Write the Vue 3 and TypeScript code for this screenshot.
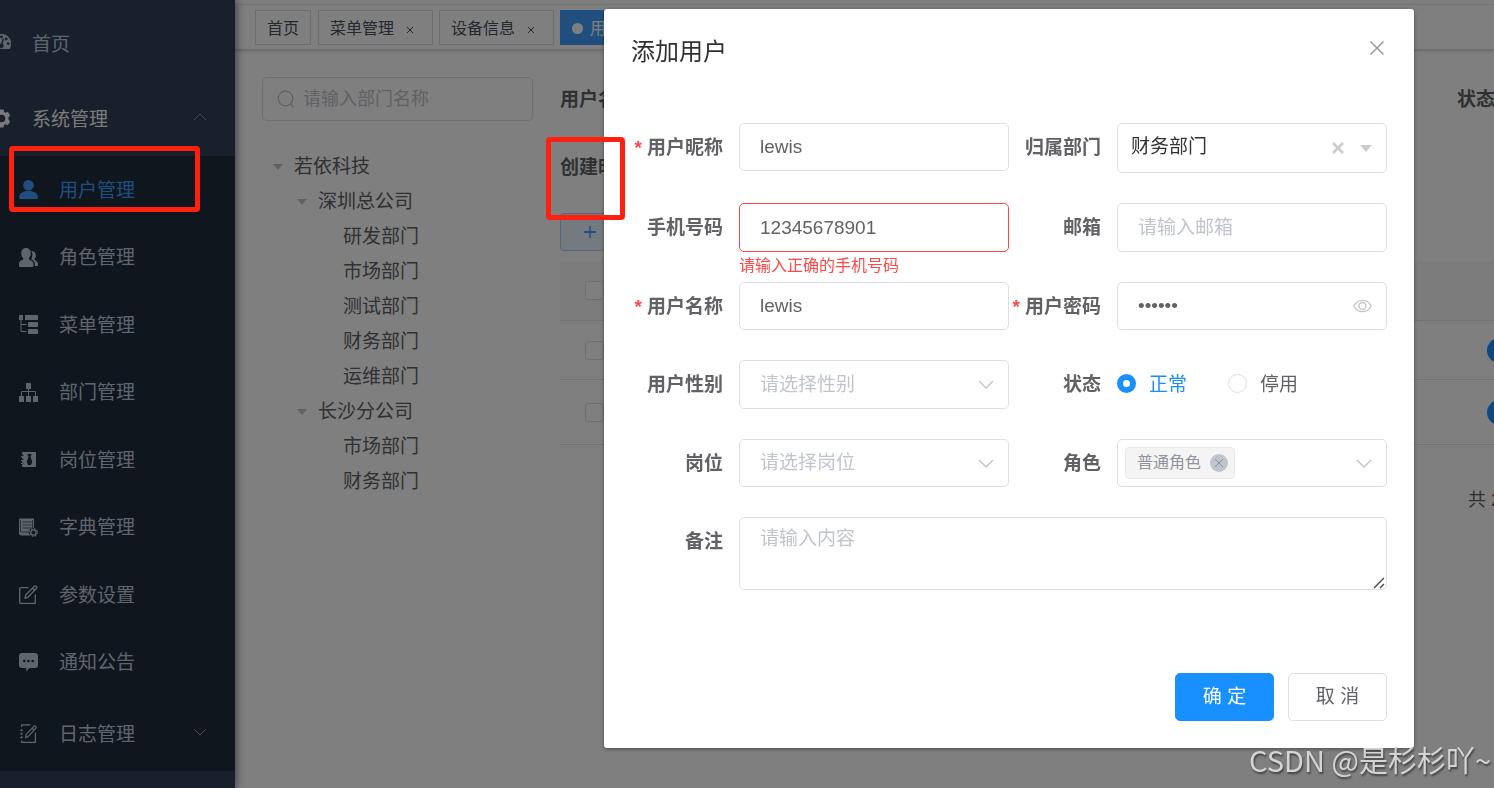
<script setup lang="ts">
import { ref } from 'vue'

interface MenuItem {
  title: string
  icon: string
}
interface TreeNode {
  label: string
  level: number
  leaf?: boolean
}

const submenuBg = '#1f2d3d'
const sidebarBg = '#304156'

const icons: Record<string, string> = {
  dashboard: `<path fill="currentColor" d="M9.5 0A9.5 9.5 0 0 0 1.600 15H17.400A9.500 9.500 0 0 0 9.500 0z"/><g fill="${sidebarBg}"><circle cx="2.800" cy="9.600" r="1.400"/><circle cx="4.800" cy="5" r="1.400"/><circle cx="9.500" cy="3" r="1.400"/><circle cx="14.200" cy="5" r="1.400"/><circle cx="16.200" cy="9.600" r="1.400"/><circle cx="9.300" cy="11.800" r="2.400"/></g><path d="M9.500 11.200L11.200 5.200" stroke="${sidebarBg}" stroke-width="1.400" stroke-linecap="round"/>`,
  gear: `<path fill="currentColor" fill-rule="evenodd" d="M7.500 .5h4l.6 2.400 1.300.8 2.500-.8 2.300 3.600-1.700 1.800v2.400l1.700 1.800-2.300 3.600-2.500-.8-1.300.8-.6 2.400h-4l-.6-2.400-1.300-.8-2.500.8L.8 12.500l1.700-1.800V8.300L.8 6.500l2.300-3.600 2.500.8 1.300-.8zM9.500 5.700a3.800 3.800 0 1 0 0 7.600 3.800 3.800 0 0 0 0-7.600z"/>`,
  user: `<g fill="currentColor"><circle cx="9.500" cy="5.300" r="5.300"/><path d="M0 17.500C0 13.500 4 11 9.500 11S19 13.500 19 17.500Q19 19 17.500 19H1.500Q0 19 0 17.500z"/></g>`,
  peoples: `<g fill="currentColor"><path d="M7 0C9.800 0 11.800 2 11.800 5c0 2-.7 3.800-1.800 5v1.500c2 .9 4.500 1.700 4.500 4.500v2q0 1-1 1H1q-1 0-1-1v-2c0-2.800 2.500-3.600 4.200-4.500V10C2.900 8.800 2.200 7 2.200 5 2.200 2 4.200 0 7 0z"/><path d="M12 3c3 0 4.900 1.600 4.900 4.200 0 1.500-.6 2.800-1.500 3.800v1c1.800.8 3.600 1.600 3.600 4v2h-3.200v-2.200c0-2.300-1.600-3.600-3.600-4.600.8-1.300 1.200-3 1.200-4.700 0-1.300-.4-2.500-1.400-3.500z"/></g>`,
  tree: `<g fill="currentColor"><rect width="4" height="5" rx=".6"/><rect x="6" width="13" height="5" rx=".6"/><rect x="9" y="7" width="10" height="5" rx=".6"/><rect x="9" y="14" width="10" height="5" rx=".6"/></g><path d="M2 4v12.500h5.500M2 9.500h5.500" fill="none" stroke="currentColor"/>`,
  org: `<g fill="currentColor"><rect x="7" width="5" height="6" rx=".5"/><rect y="13" width="5" height="6" rx=".5"/><rect x="7" y="13" width="5" height="6" rx=".5"/><rect x="14" y="13" width="5" height="6" rx=".5"/></g><path d="M9.500 5v8.500M2.500 13.500v-5h14v5" fill="none" stroke="currentColor"/>`,
  post: `<rect x="3" y="2" width="14" height="15" rx="1" fill="currentColor"/><g fill="${submenuBg}"><path d="M8.300 4h4.400l-1.200 2.700L13.300 12 12 15H9l-1.300-3 1.800-5.300z"/><circle cx="3.500" cy="5.500" r="1"/><circle cx="3.500" cy="9.500" r="1"/><circle cx="3.500" cy="13.500" r="1"/></g><path d="M2 6.500h2M2 10.500h2M2 13.500h2" stroke="currentColor"/>`,
  dict: `<path d="M1 .500h14v17H2.500Q0 17.500 0 15V2Q0 .500 1 .500z" fill="currentColor"/><path d="M3.500 4h9M3.500 7h9M3.500 10h9M1 14h9M1.500 2v11.500M13.500 2v9" stroke="${submenuBg}" stroke-width=".7"/><circle cx="14.500" cy="14.500" r="4.700" fill="${submenuBg}"/><g fill="none" stroke="currentColor"><circle cx="14.500" cy="14.500" r="2.700" stroke-width="1.300"/><circle cx="14.500" cy="14.500" r="3.800" stroke-width="1.300" stroke-dasharray="1.500 1.500"/></g>`,
  edit: `<g fill="none" stroke="currentColor" stroke-width="1.300" stroke-linejoin="round"><path d="M9.500 2.600H1.600Q.7 2.600.7 3.500v14Q.7 18.400 1.600 18.400h13.800q.9 0 .9-.9V9.500"/><path d="M6 13.300l.8-3.500 8.600-8.600q1-.8 2 .1t.1 2L9 12.200zM13.500 3l2.300 2.300"/></g>`,
  message: `<path fill="currentColor" d="M3 0h13q3 0 3 3v9q0 3-3 3h-5.500L7.300 18.500V15H3q-3 0-3-3V3Q0 0 3 0z"/><g fill="${submenuBg}"><circle cx="5.300" cy="8" r="1.300"/><circle cx="9.500" cy="8" r="1.300"/><circle cx="13.700" cy="8" r="1.300"/></g>`,
  log: `<g fill="none" stroke="currentColor" stroke-width="1.200" stroke-linejoin="round"><path d="M11.500.8H2.700V3M2.700 16.500v1.900h13.700V8.500"/><path d="M2.700 5v9.500" stroke-dasharray="2 1.600"/><path d="M1 6.500h2.500M1 10h2.500M1 13.500h2.500"/><path d="M6.500 13.700l.7-3.400 7.600-8q.9-.8 1.900.1t.1 2l-7.500 8zM13 4l2.200 2.200"/></g>`,
}

const submenu: MenuItem[] = [
  { title: '用户管理', icon: 'user' },
  { title: '角色管理', icon: 'peoples' },
  { title: '菜单管理', icon: 'tree' },
  { title: '部门管理', icon: 'org' },
  { title: '岗位管理', icon: 'post' },
  { title: '字典管理', icon: 'dict' },
  { title: '参数设置', icon: 'edit' },
  { title: '通知公告', icon: 'message' },
]

const departments: TreeNode[] = [
  { label: '若依科技', level: 0 },
  { label: '深圳总公司', level: 1 },
  { label: '研发部门', level: 2, leaf: true },
  { label: '市场部门', level: 2, leaf: true },
  { label: '测试部门', level: 2, leaf: true },
  { label: '财务部门', level: 2, leaf: true },
  { label: '运维部门', level: 2, leaf: true },
  { label: '长沙分公司', level: 1 },
  { label: '市场部门', level: 2, leaf: true },
  { label: '财务部门', level: 2, leaf: true },
]

const nickName = ref('lewis')
const phone = ref('12345678901')
const email = ref('')
const userName = ref('lewis')
const password = ref('123456')
const status = ref('0')
const dept = ref('财务部门')
const gender = ref('')
const post = ref('')
const remark = ref('')
</script>

<template>
  <div class="page">
    <nav class="sidebar">
      <a href="#" class="item top">
        <svg class="icon" viewBox="0 0 19 19" v-html="icons.dashboard"></svg>
        <span>首页</span>
      </a>
      <a href="#" class="item top open">
        <svg class="icon" viewBox="0 0 19 19" v-html="icons.gear"></svg>
        <span>系统管理</span>
        <svg class="arrow" viewBox="0 0 14 8"><path d="M1 7l6-6 6 6" /></svg>
      </a>
      <div class="submenu">
        <div class="group">
          <a v-for="(m, i) in submenu" :key="m.title" href="#" class="item sub" :class="{ active: i === 0 }">
            <svg class="icon" viewBox="0 0 19 19" v-html="icons[m.icon]"></svg>
            <span>{{ m.title }}</span>
          </a>
        </div>
        <a href="#" class="item sub last">
          <svg class="icon" viewBox="0 0 19 19" v-html="icons.log"></svg>
          <span>日志管理</span>
          <svg class="arrow" viewBox="0 0 14 8"><path d="M1 1l6 6 6-6" /></svg>
        </a>
      </div>
    </nav>

    <div class="main">
      <div class="tags">
        <a href="#" class="tag">首页</a>
        <a href="#" class="tag">菜单管理<svg class="x" viewBox="0 0 8 8"><path d="M1 1l6 6M7 1l-6 6" /></svg></a>
        <a href="#" class="tag">设备信息<svg class="x" viewBox="0 0 8 8"><path d="M1 1l6 6M7 1l-6 6" /></svg></a>
        <a href="#" class="tag current"><i class="dot"></i>用户管理<svg class="x" viewBox="0 0 8 8"><path d="M1 1l6 6M7 1l-6 6" /></svg></a>
      </div>

      <div class="content">
        <aside class="depts">
          <label class="search">
            <svg viewBox="0 0 18 18"><circle cx="8.500" cy="8.500" r="7.300" /><path d="M13.500 14l3 3" /></svg>
            <input type="text" placeholder="请输入部门名称" aria-label="部门名称" />
          </label>
          <ul class="tree">
            <li v-for="(n, i) in departments" :key="i" :class="'level' + n.level">
              <svg class="caret" viewBox="0 0 10 6"><path v-if="!n.leaf" d="M0 0h10L5 6z" /></svg>
              <span>{{ n.label }}</span>
            </li>
          </ul>
        </aside>

        <section class="users">
          <div class="filter"><b>用户名称</b><b class="edge">状态</b></div>
          <div class="filter"><b>创建时间</b></div>
          <button type="button" class="add">
            <svg viewBox="0 0 14 14"><path d="M7 1v12M1 7h12" /></svg>新增
          </button>
          <table>
            <thead>
              <tr><th><input type="checkbox" aria-label="全选" /></th><th class="narrow"></th></tr>
            </thead>
            <tbody>
              <tr class="first"><td><input type="checkbox" aria-label="选择第一行" /></td><td class="narrow"><i class="switch"></i></td></tr>
              <tr class="second"><td><input type="checkbox" aria-label="选择第二行" /></td><td class="narrow"><i class="switch"></i></td></tr>
            </tbody>
          </table>
          <div class="pager"><span>共 2 条</span></div>
        </section>
      </div>
    </div>

    <div class="overlay">
      <div class="dialog" role="dialog" aria-labelledby="dialog-title">
        <header>
          <h2 id="dialog-title">添加用户</h2>
          <button type="button" class="close" aria-label="关闭">
            <svg viewBox="0 0 14 14"><path d="M.5.500l13 13M13.500.500l-13 13" /></svg>
          </button>
        </header>

        <form @submit.prevent>
          <div class="field">
            <label for="nick" class="required">用户昵称</label>
            <div class="control"><input id="nick" v-model="nickName" type="text" /></div>
          </div>
          <div class="field">
            <label for="dept">归属部门</label>
            <div class="control dept">
              <select id="dept" v-model="dept"><option>财务部门</option><option>市场部门</option></select>
              <span class="marks">
                <svg class="clear" viewBox="0 0 12 12"><path d="M1 1l10 10M11 1L1 11" /></svg>
                <svg class="down" viewBox="0 0 12 7"><path d="M0 0h12L6 7z" /></svg>
              </span>
            </div>
          </div>

          <div class="field">
            <label for="phone">手机号码</label>
            <div class="control tall invalid">
              <input id="phone" v-model="phone" type="text" aria-describedby="phone-error" />
              <p id="phone-error" class="error">请输入正确的手机号码</p>
            </div>
          </div>
          <div class="field">
            <label for="email">邮箱</label>
            <div class="control tall"><input id="email" v-model="email" type="text" placeholder="请输入邮箱" /></div>
          </div>

          <div class="field">
            <label for="name" class="required">用户名称</label>
            <div class="control"><input id="name" v-model="userName" type="text" /></div>
          </div>
          <div class="field">
            <label for="pwd" class="required">用户密码</label>
            <div class="control">
              <input id="pwd" v-model="password" type="password" />
              <span class="marks eye">
                <svg viewBox="0 0 20 14"><path d="M.8 7C5 -1 15 -1 19.200 7 15 15 5 15 .8 7z" /><circle cx="10" cy="7" r="3.700" /></svg>
              </span>
            </div>
          </div>

          <div class="field">
            <label for="gender">用户性别</label>
            <div class="control tall">
              <select id="gender" v-model="gender" class="blank"><option value="">请选择性别</option><option>男</option><option>女</option></select>
              <span class="marks"><svg class="chevron" viewBox="0 0 16 9"><path d="M1 1l7 7 7-7" /></svg></span>
            </div>
          </div>
          <div class="field">
            <span class="label">状态</span>
            <div class="radios">
              <label><input v-model="status" type="radio" name="status" value="0" /><span>正常</span></label>
              <label><input v-model="status" type="radio" name="status" value="1" /><span>停用</span></label>
            </div>
          </div>

          <div class="field">
            <label for="post">岗位</label>
            <div class="control">
              <select id="post" v-model="post" class="blank"><option value="">请选择岗位</option></select>
              <span class="marks"><svg class="chevron" viewBox="0 0 16 9"><path d="M1 1l7 7 7-7" /></svg></span>
            </div>
          </div>
          <div class="field">
            <label for="role">角色</label>
            <div class="control roles">
              <span class="chip">普通角色
                <button type="button" aria-label="移除普通角色"><svg viewBox="0 0 10 10"><path d="M1 1l8 8M9 1l-8 8" /></svg></button>
              </span>
              <select id="role"><option value=""></option></select>
              <span class="marks"><svg class="chevron" viewBox="0 0 16 9"><path d="M1 1l7 7 7-7" /></svg></span>
            </div>
          </div>

          <div class="field wide">
            <label for="remark">备注</label>
            <div class="memo">
              <textarea id="remark" v-model="remark" placeholder="请输入内容"></textarea>
              <svg class="grip" viewBox="0 0 12 12"><path d="M1 11L11 1M7 11l4-4" /></svg>
            </div>
          </div>
        </form>

        <footer>
          <button type="button" class="primary">确 定</button>
          <button type="button">取 消</button>
        </footer>
      </div>
    </div>

    <div class="highlight menu-mark"></div>
    <div class="highlight filter-mark"></div>
    <div class="watermark">CSDN @是杉杉吖~</div>
  </div>
</template>

<style>
body {
  margin: 0;
  background: #fff;
}
</style>

<style scoped>
* {
  box-sizing: border-box;
}
.page {
  position: relative;
  display: flex;
  height: 100vh;
  min-height: 788px;
  overflow: hidden;
  font: 19px/28px "Liberation Sans", "Noto Sans CJK SC", sans-serif;
  color: #606266;
}
svg {
  display: block;
  flex: none;
  fill: none;
}
input, select, textarea, button {
  font: inherit;
  color: inherit;
  margin: 0;
}
a {
  color: inherit;
  text-decoration: none;
}

.sidebar {
  flex: none;
  width: 235px;
  padding-top: 6px;
  background: #304156;
  color: #bfcbd9;
  box-shadow: 2px 0 8px rgba(0, 21, 41, 0.5);
  z-index: 1;
  overflow: hidden auto;
  scrollbar-width: none;
}
.item {
  display: flex;
  align-items: center;
  padding: 0 28px 0 19px;
}
.item span {
  padding-top: 2px;
}
.item.top {
  height: 75px;
  margin-left: -27px;
}
.item .icon {
  width: 19px;
  height: 19px;
  margin-right: 21px;
}
.item .arrow {
  width: 14px;
  height: 8px;
  margin: 0 0 3px auto;
  stroke: #909399;
}
.open {
  color: #f4f4f5;
}
.submenu {
  background: #1f2d3d;
}
.group {
  display: flex;
  flex-direction: column;
  height: 540px;
}
.sub {
  flex: 1;
}
.sub.last {
  height: 75px;
}
.active {
  color: #409eff;
}

.main {
  flex: 1;
  min-width: 0;
}
.tags {
  display: flex;
  gap: 6px;
  height: 45px;
  margin-top: 5px;
  padding: 5px 20px;
  border-bottom: 1px solid #d8dce5;
  box-shadow: 0 1px 3px rgba(0, 0, 0, 0.2), 0 -1px 1px rgba(0, 0, 0, 0.05);
  font-size: 16px;
}
.tag {
  display: flex;
  align-items: center;
  height: 35px;
  padding: 2px 11px 0;
  border: 1px solid #d8dce5;
  color: #495060;
  white-space: nowrap;
}
.tag:first-child {
  margin-right: 1px;
}
.tag .x {
  width: 8px;
  height: 8px;
  margin: 2px 7px 0 12px;
  stroke: currentColor;
}
.tag.current {
  background: #409eff;
  border-color: #409eff;
  color: #fff;
}
.dot {
  width: 11px;
  height: 11px;
  margin-right: 7px;
  border-radius: 50%;
  background: #fff;
}
.content {
  display: flex;
  gap: 27px;
  padding: 27px 0 0 27px;
}
.depts {
  flex: none;
  width: 271px;
}
.search {
  display: flex;
  align-items: center;
  gap: 8px;
  height: 44px;
  padding: 0 14px;
  border: 1px solid #dcdfe6;
  border-radius: 5px;
  font-size: 18px;
}
.search svg {
  width: 18px;
  height: 18px;
  stroke: #c0c4cc;
  stroke-width: 1.3;
}
.search input {
  flex: 1;
  min-width: 0;
  padding: 0;
  border: 0;
  outline: 0;
  background: none;
}
::placeholder {
  color: #c0c4cc;
  opacity: 1;
}
.tree {
  margin: 28px 0 0;
  padding: 0;
  list-style: none;
}
.tree li {
  display: flex;
  align-items: center;
  gap: 11px;
  height: 35px;
  padding-left: 11px;
}
.tree .level1 {
  padding-left: 35px;
}
.tree .level2 {
  padding-left: 60px;
}
.caret {
  width: 10px;
  height: 6px;
  fill: #c0c4cc;
}
.users {
  flex: 1;
  min-width: 0;
}
.filter {
  display: flex;
  justify-content: space-between;
  height: 68px;
  padding-top: 9px;
  white-space: nowrap;
}
.edge {
  width: 37px;
}
.add {
  display: flex;
  align-items: center;
  gap: 8px;
  height: 38px;
  padding: 0 22px;
  border: 1px solid #a3d3ff;
  border-radius: 4px;
  background: #e8f4ff;
  color: #1890ff;
  font-size: 16px;
}
.add svg {
  width: 14px;
  height: 14px;
  stroke: currentColor;
  stroke-width: 1.3;
}
table {
  width: 100%;
  margin-top: 10px;
  table-layout: fixed;
  border-collapse: separate;
  border-spacing: 0;
}
th, td {
  height: 60px;
  padding: 0 0 0 25px;
  border-bottom: 1px solid #dfe6ec;
  text-align: left;
}
th {
  background: #f8f8f9;
}
.first td {
  height: 59px;
}
.second td {
  height: 65px;
}
.narrow {
  width: 7px;
  padding: 0;
}
table input {
  appearance: none;
  display: block;
  width: 19px;
  height: 19px;
  border: 1px solid #dcdfe6;
  border-radius: 3px;
  background: #fff;
}
.switch {
  display: block;
  width: 54px;
  height: 25px;
  border-radius: 13px;
  background: #1890ff;
}
.pager {
  display: flex;
  justify-content: flex-end;
  margin-top: 41px;
  font-size: 18px;
  white-space: nowrap;
}
.pager span {
  width: 26px;
}

.overlay {
  position: fixed;
  inset: 0;
  z-index: 2;
  padding: 9px 80px 40px 604px;
  background: rgba(0, 0, 0, 0.5);
}
.dialog {
  padding: 27px;
  border-radius: 3px;
  background: #fff;
  box-shadow: 0 1px 4px rgba(0, 0, 0, 0.4);
}
header {
  display: flex;
  justify-content: space-between;
  align-items: flex-start;
}
h2 {
  margin: 0;
  font-size: 24px;
  line-height: 32px;
  font-weight: 400;
  color: #303133;
}
.close {
  padding: 5px 3px;
  border: 0;
  background: none;
}
.close svg {
  width: 14px;
  height: 14px;
  stroke: #909399;
  stroke-width: 1.4;
}
form {
  display: grid;
  grid-template-columns: repeat(2, minmax(0, 1fr));
  row-gap: 30px;
  margin-top: 55px;
}
.field {
  display: flex;
  align-items: flex-start;
  height: 48px;
}
.field:has(.tall) {
  height: 49px;
}
.field:has(.dept) {
  height: 50px;
}
.wide {
  grid-column: 1 / -1;
  height: auto;
}
.field > label, .label {
  flex: none;
  width: 108px;
  padding-right: 16px;
  line-height: 50px;
  font-weight: 700;
  text-align: right;
  white-space: nowrap;
}
.required::before {
  content: "*";
  margin-right: 5px;
  color: #ff4949;
}
.control {
  position: relative;
  flex: 1;
  display: flex;
  min-width: 0;
  height: 48px;
  border: 1px solid #dcdfe6;
  border-radius: 5px;
  background: #fff;
}
.control.tall {
  height: 49px;
}
.control.dept {
  height: 50px;
  padding-bottom: 2px;
  color: #333;
}
.control.invalid {
  border-color: #ff4949;
}
.control input, .control select {
  flex: 1;
  min-width: 0;
  padding: 0 20px;
  border: 0;
  outline: 0;
  background: none;
  appearance: none;
}
.control.dept select {
  padding: 0 13px;
}
.control .blank {
  color: #c0c4cc;
}
.marks {
  position: absolute;
  inset: 0 14px 0 auto;
  display: flex;
  align-items: center;
  gap: 16px;
  pointer-events: none;
}
.chevron {
  width: 16px;
  height: 9px;
  stroke: #c0c4cc;
  stroke-width: 1.4;
}
.clear {
  width: 12px;
  height: 12px;
  stroke: #ccc;
  stroke-width: 2.6;
}
.down {
  width: 12px;
  height: 7px;
  fill: #ccc;
}
.eye svg {
  width: 19px;
  height: 14px;
  stroke: #c0c4cc;
  stroke-width: 1.4;
}
.error {
  position: absolute;
  top: 100%;
  left: -1px;
  margin: 5px 0 0;
  font-size: 16px;
  line-height: 20px;
  color: #ff4949;
}
.radios {
  display: flex;
  gap: 41px;
  height: 47px;
}
.radios label {
  display: flex;
  align-items: center;
  gap: 13px;
}
.radios span {
  padding-top: 2px;
}
.radios input {
  appearance: none;
  width: 19px;
  height: 19px;
  border: 1px solid #dcdfe6;
  border-radius: 50%;
}
.radios input:checked {
  border: 6px solid #1890ff;
}
.radios input:checked + span {
  color: #1890ff;
}
.roles {
  align-items: center;
  padding-left: 7px;
}
.chip {
  display: flex;
  align-items: center;
  gap: 9px;
  height: 32px;
  padding: 0 6px 0 11px;
  border: 1px solid #e9e9eb;
  border-radius: 4px;
  background: #f4f4f5;
  color: #909399;
  font-size: 16px;
}
.chip button {
  display: grid;
  place-items: center;
  width: 18px;
  height: 18px;
  padding: 0;
  border: 0;
  border-radius: 50%;
  background: #c0c4cc;
}
.chip svg {
  width: 10px;
  height: 10px;
  stroke: #909399;
}
.memo {
  position: relative;
  flex: 1;
  display: flex;
}
.grip {
  position: absolute;
  right: 2px;
  bottom: 1px;
  width: 12px;
  height: 12px;
  stroke: #444;
  stroke-width: 1.3;
  pointer-events: none;
}
textarea {
  flex: 1;
  height: 73px;
  padding: 7px 20px;
  border: 1px solid #dcdfe6;
  border-radius: 5px;
  outline: 0;
  resize: none;
}
footer {
  display: flex;
  justify-content: flex-end;
  gap: 14px;
  margin-top: 83px;
}
footer button {
  width: 99px;
  height: 48px;
  padding: 0;
  border: 1px solid #dcdfe6;
  border-radius: 5px;
  background: #fff;
}
footer .primary {
  border-color: #1890ff;
  background: #1890ff;
  color: #fff;
}

.highlight {
  position: absolute;
  z-index: 3;
  border: 5px solid #ff2010;
  border-radius: 4px;
  pointer-events: none;
}
.menu-mark {
  top: 146px;
  left: 9px;
  width: 191px;
  height: 66px;
}
.filter-mark {
  top: 137px;
  left: 546px;
  width: 79px;
  height: 83px;
}
.watermark {
  position: absolute;
  right: 3px;
  bottom: 9px;
  z-index: 3;
  font: 29px/40px "Noto Sans CJK SC", sans-serif;
  color: #d4d4d4;
  text-shadow: 1px 2px 2px rgba(0, 0, 0, 0.5);
  white-space: nowrap;
}
</style>
